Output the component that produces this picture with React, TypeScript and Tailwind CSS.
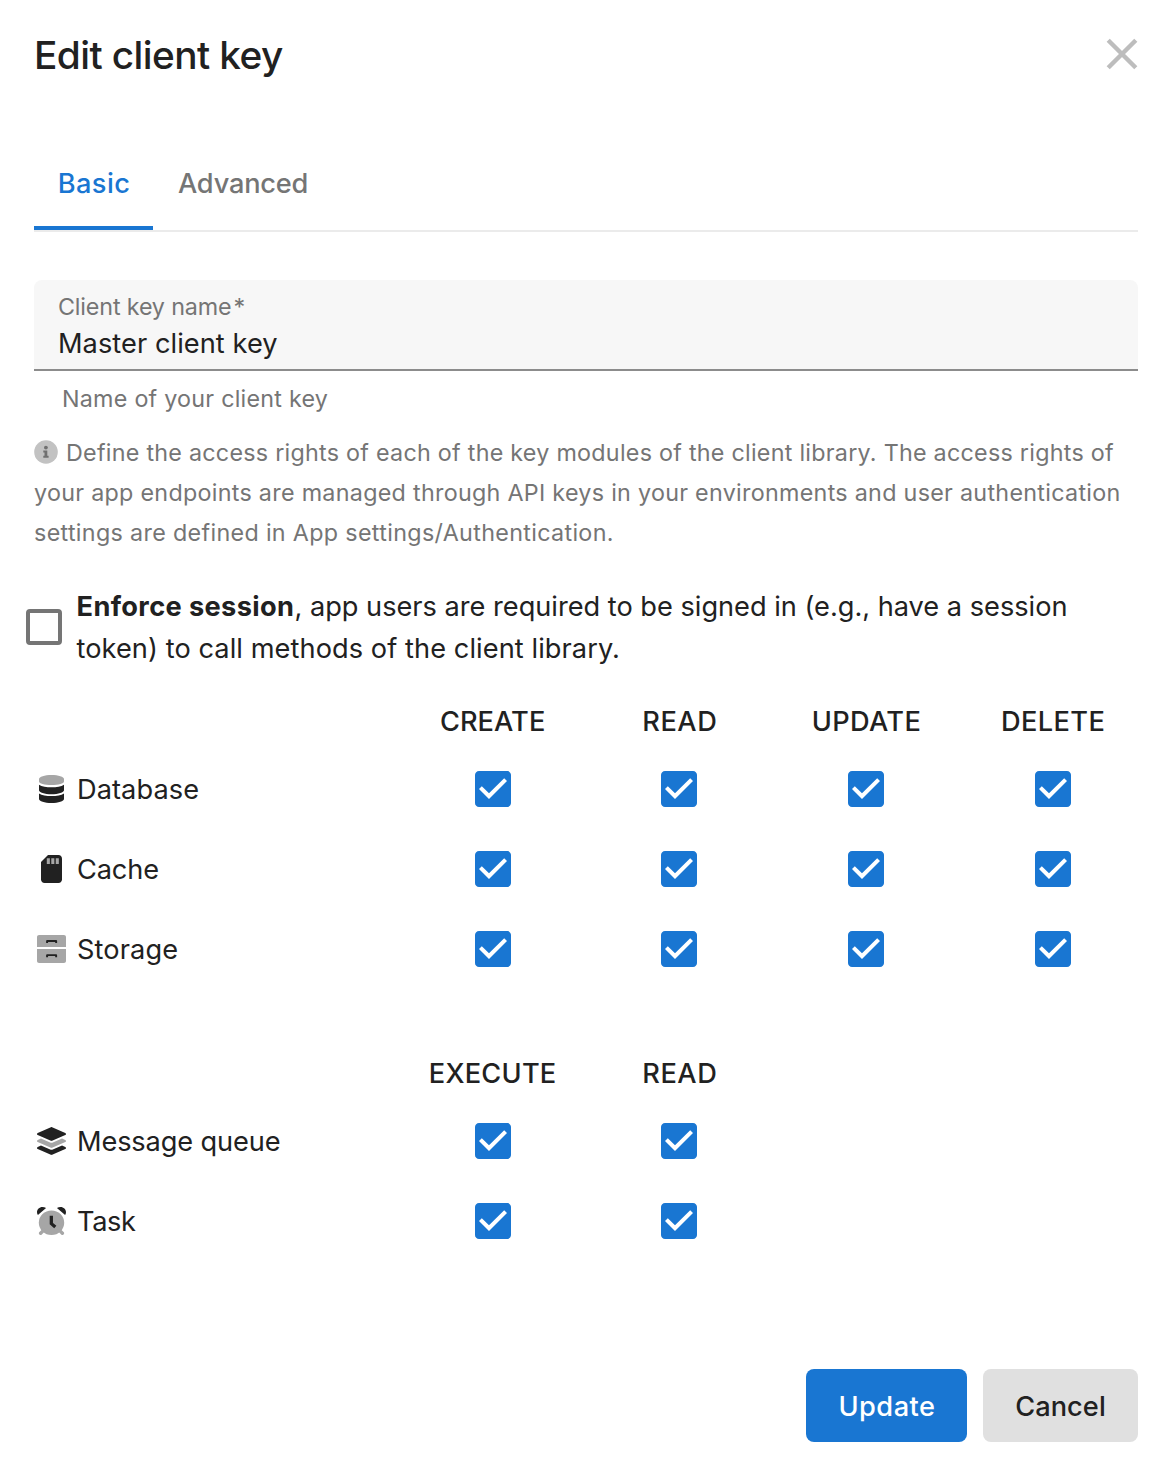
import type { ReactNode } from "react";

function CheckedBox() {
  return (
    <svg viewBox="0 0 24 24" className="h-12 w-12 shrink-0">
      <path
        fill="#1976d2"
        d="M19 3H5c-1.11 0-2 .9-2 2v14c0 1.1.89 2 2 2h14c1.11 0 2-.9 2-2V5c0-1.1-.89-2-2-2z"
      />
      <path fill="#fff" d="M10 17l-5-5 1.41-1.41L10 14.17l7.59-7.59L19 8l-9 9z" />
    </svg>
  );
}

function DatabaseIcon() {
  return (
    <svg viewBox="0 0 448 512" preserveAspectRatio="none" className="h-7 w-[25px]">
      <path
        fill="#a6a6a6"
        d="M448 73.14v45.72C448 159.14 347.67 184 224 184S0 159.14 0 118.86V73.14C0 32.86 100.33 0 224 0s224 32.86 224 73.14z"
      />
      <path
        fill="#212121"
        d="M448 176v102.86C448 319.14 347.67 352 224 352S0 319.14 0 278.86V176c48.12 33.14 136.21 48.57 224 48.57S399.87 209.14 448 176zM448 336v102.86C448 479.14 347.67 512 224 512S0 479.14 0 438.86V336c48.13 33.14 136.21 48.57 224 48.57S399.87 369.14 448 336z"
      />
    </svg>
  );
}

function CacheIcon() {
  return (
    <svg viewBox="0 0 384 512" className="h-7">
      <path
        fill="#212121"
        d="M320 0H128L0 128v320c0 35.3 28.7 64 64 64h256c35.3 0 64-28.7 64-64V64c0-35.3-28.7-64-64-64z"
      />
      <path fill="#a6a6a6" d="M106 58h56v106h-56zM188 58h56v106h-56zM270 58h56v106h-56z" />
    </svg>
  );
}

function StorageIcon() {
  return (
    <svg viewBox="0 0 512 512" preserveAspectRatio="none" className="h-7 w-[29px]">
      <path
        fill="#a6a6a6"
        d="M36 0h440c20 0 36 16 36 36v184H0V36C0 16 16 0 36 0zM0 254h512v222c0 20-16 36-36 36H36c-20 0-36-16-36-36z"
      />
      <path
        fill="none"
        stroke="#212121"
        strokeWidth="34"
        strokeLinejoin="round"
        d="M178 148v-38h160v38M178 406v-38h160v38"
      />
    </svg>
  );
}

function QueueIcon() {
  return (
    <svg viewBox="0 0 512 512" preserveAspectRatio="none" className="h-7 w-[29px]">
      <path
        fill="#212121"
        d="M12.41 148.02l232.94 105.67c6.8 3.09 14.49 3.09 21.29 0l232.94-105.67c16.55-7.51 16.55-32.52 0-40.03L266.65 2.31a25.607 25.607 0 0 0-21.29 0L12.41 107.98c-16.55 7.51-16.55 32.53 0 40.04z"
      />
      <path
        fill="#a6a6a6"
        d="M499.58 235.99l-58.09-26.33-161.64 73.27c-7.56 3.43-15.59 5.17-23.86 5.17s-16.29-1.74-23.86-5.17L70.51 209.66l-58.1 26.33c-16.55 7.5-16.55 32.5 0 40l232.94 105.59c6.8 3.08 14.49 3.08 21.29 0L499.59 276c16.55-7.51 16.55-32.51-.01-40.01z"
      />
      <path
        fill="#212121"
        d="M499.59 363.73l-57.86-26.23-161.86 73.37c-7.56 3.43-15.59 5.17-23.86 5.17s-16.29-1.74-23.86-5.17L70.29 337.5l-57.88 26.23c-16.55 7.5-16.55 32.5 0 40l232.94 105.59c6.8 3.08 14.49 3.08 21.29 0l232.94-105.59c16.55-7.5 16.55-32.5.01-40z"
      />
    </svg>
  );
}

function TaskIcon() {
  return (
    <svg viewBox="0 0 512 512" preserveAspectRatio="none" className="h-7 w-[29px]">
      <circle cx="256" cy="288" r="224" fill="#a6a6a6" />
      <path d="M120 424l-56 56M392 424l56 56" stroke="#a6a6a6" strokeWidth="60" strokeLinecap="round" />
      <path
        fill="#212121"
        d="M96 0C43 0 0 43 0 96c0 19 6 36 16 51L160 20C142 7 117 0 96 0zM416 0c53 0 96 43 96 96 0 19-6 36-16 51L352 20c18-13 43-20 64-20z"
      />
      <path d="M253 160v144l70 62" fill="none" stroke="#212121" strokeWidth="58" strokeLinejoin="round" />
    </svg>
  );
}

function InfoIcon() {
  return (
    <svg viewBox="0 0 24 24" className="mt-[7px] mr-2 inline-block h-6 w-6 align-top">
      <circle cx="12" cy="12" r="11.8" fill="#c2c2c2" />
      <circle cx="11.9" cy="7.6" r="1.9" fill="#707070" />
      <path fill="#707070" d="M9.3 10.5h4v5.2h1.3v2H9.3v-2h1.2v-3.2H9.3z" />
    </svg>
  );
}

interface Header {
  text: string;
  spacing: string;
}
interface Row {
  icon: ReactNode;
  text: string;
  spacing: string;
}

function PermissionGrid({ headers, rows }: { headers: Header[]; rows: Row[] }) {
  return (
    <div className="-mr-2 -ml-2">
      <div className="grid h-14 grid-cols-6 items-center pt-0.5">
        <div className="col-span-2" />
        {headers.map((h) => (
          <div key={h.text} className={`text-center font-medium ${h.spacing}`}>
            {h.text}
          </div>
        ))}
      </div>
      {rows.map((r) => (
        <div key={r.text} className="grid h-20 grid-cols-6 items-center">
          <div className="col-span-2 flex items-center pl-2">
            <span className="flex w-[35px] justify-center">{r.icon}</span>
            <span className={`ml-2 pt-0.5 ${r.spacing}`}>{r.text}</span>
          </div>
          {headers.map((h) => (
            <div key={h.text} className="flex justify-center">
              <CheckedBox />
            </div>
          ))}
        </div>
      ))}
    </div>
  );
}

export default function App() {
  return (
    <div className="flex h-[1464px] w-[1174px] flex-col bg-white pt-[23px] pr-9 pl-[34px] font-['Inter',sans-serif] text-[27.2px] leading-[42px] text-[#212121]">
      <header className="flex h-16 items-center justify-between">
        <h1 className="text-[38.8px] font-medium tracking-[-0.58px]">Edit client key</h1>
        <svg viewBox="0 0 32 32" className="-mt-0.5 h-8 w-8" stroke="#bdbdbd" strokeWidth="4.4">
          <path d="M2.2 2.2l27.6 27.6M29.8 2.2L2.2 29.8" />
        </svg>
      </header>

      <nav className="mt-[49px] flex h-24 border-b-2 border-[#ebebeb] font-medium">
        <div className="flex w-[119px] items-center justify-center border-b-4 border-[#1976d2] pt-1.5 pl-px tracking-[0.4px] text-[#1976d2]">
          Basic
        </div>
        <div className="flex items-center pt-0.5 pl-[25px] tracking-[-0.2px] text-[#757575]">Advanced</div>
      </nav>

      <div className="mt-12 h-[91px] rounded-t-lg border-b-2 border-[#8c8c8c] bg-[#f7f7f7] px-6 pt-2">
        <div className="flex h-[37px] items-center text-[23.3px] tracking-[-0.15px] text-[#757575]">
          Client key name<span className="ml-0.5">*</span>
        </div>
        <div className="flex h-[37px] items-center tracking-[0.06px]">Master client key</div>
      </div>
      <div className="mt-2 h-10 pl-7 text-[23.3px] leading-10 tracking-[0.24px] text-[#757575]">
        Name of your client key
      </div>

      <p className="mt-[14px] text-[23.3px] leading-10 whitespace-nowrap text-[#757575]">
        <span className="block tracking-[0.26px]">
          <InfoIcon />
          Define the access rights of each of the key modules of the client library. The access rights of
        </span>
        <span className="block tracking-[0.29px]">
          your app endpoints are managed through API keys in your environments and user authentication
        </span>
        <span className="block tracking-[0.33px]">settings are defined in App settings/Authentication.</span>
      </p>

      <div className="mt-[31px] -ml-2 flex items-center">
        <span className="h-9 w-9 rounded border-4 border-[#757575]" />
        <p className="ml-[14.5px] pt-0.5 whitespace-nowrap">
          <span className="block tracking-[-0.01px]">
            <strong className="font-bold tracking-[0.38px]">Enforce session</strong>, app users are required to be
            signed in (e.g., have a session
          </span>
          <span className="block tracking-[0.07px]">token) to call methods of the client library.</span>
        </p>
      </div>

      <div className="mt-[23px]">
        <PermissionGrid
          headers={[
            { text: "CREATE", spacing: "tracking-[0.08px]" },
            { text: "READ", spacing: "tracking-[0.5px] pl-px" },
            { text: "UPDATE", spacing: "tracking-[0.38px] pl-px" },
            { text: "DELETE", spacing: "tracking-[0.36px] pl-px" },
          ]}
          rows={[
            { icon: <DatabaseIcon />, text: "Database", spacing: "tracking-[0.06px]" },
            { icon: <CacheIcon />, text: "Cache", spacing: "tracking-[-0.15px]" },
            { icon: <StorageIcon />, text: "Storage", spacing: "tracking-[0.1px]" },
          ]}
        />
      </div>
      <div className="mt-14">
        <PermissionGrid
          headers={[
            { text: "EXECUTE", spacing: "tracking-[0.23px]" },
            { text: "READ", spacing: "tracking-[0.5px] pl-px" },
          ]}
          rows={[
            { icon: <QueueIcon />, text: "Message queue", spacing: "tracking-[-0.13px]" },
            { icon: <TaskIcon />, text: "Task", spacing: "tracking-[-0.4px]" },
          ]}
        />
      </div>

      <footer className="mt-[108px] flex justify-end gap-4 font-medium">
        <button className="h-[73px] w-[161px] rounded-lg bg-[#1976d2] pt-0.5 pl-px tracking-[0.5px] text-white">
          Update
        </button>
        <button className="h-[73px] w-[155px] rounded-lg bg-[#e0e0e0] pt-0.5 tracking-[0.06px]">Cancel</button>
      </footer>
    </div>
  );
}
